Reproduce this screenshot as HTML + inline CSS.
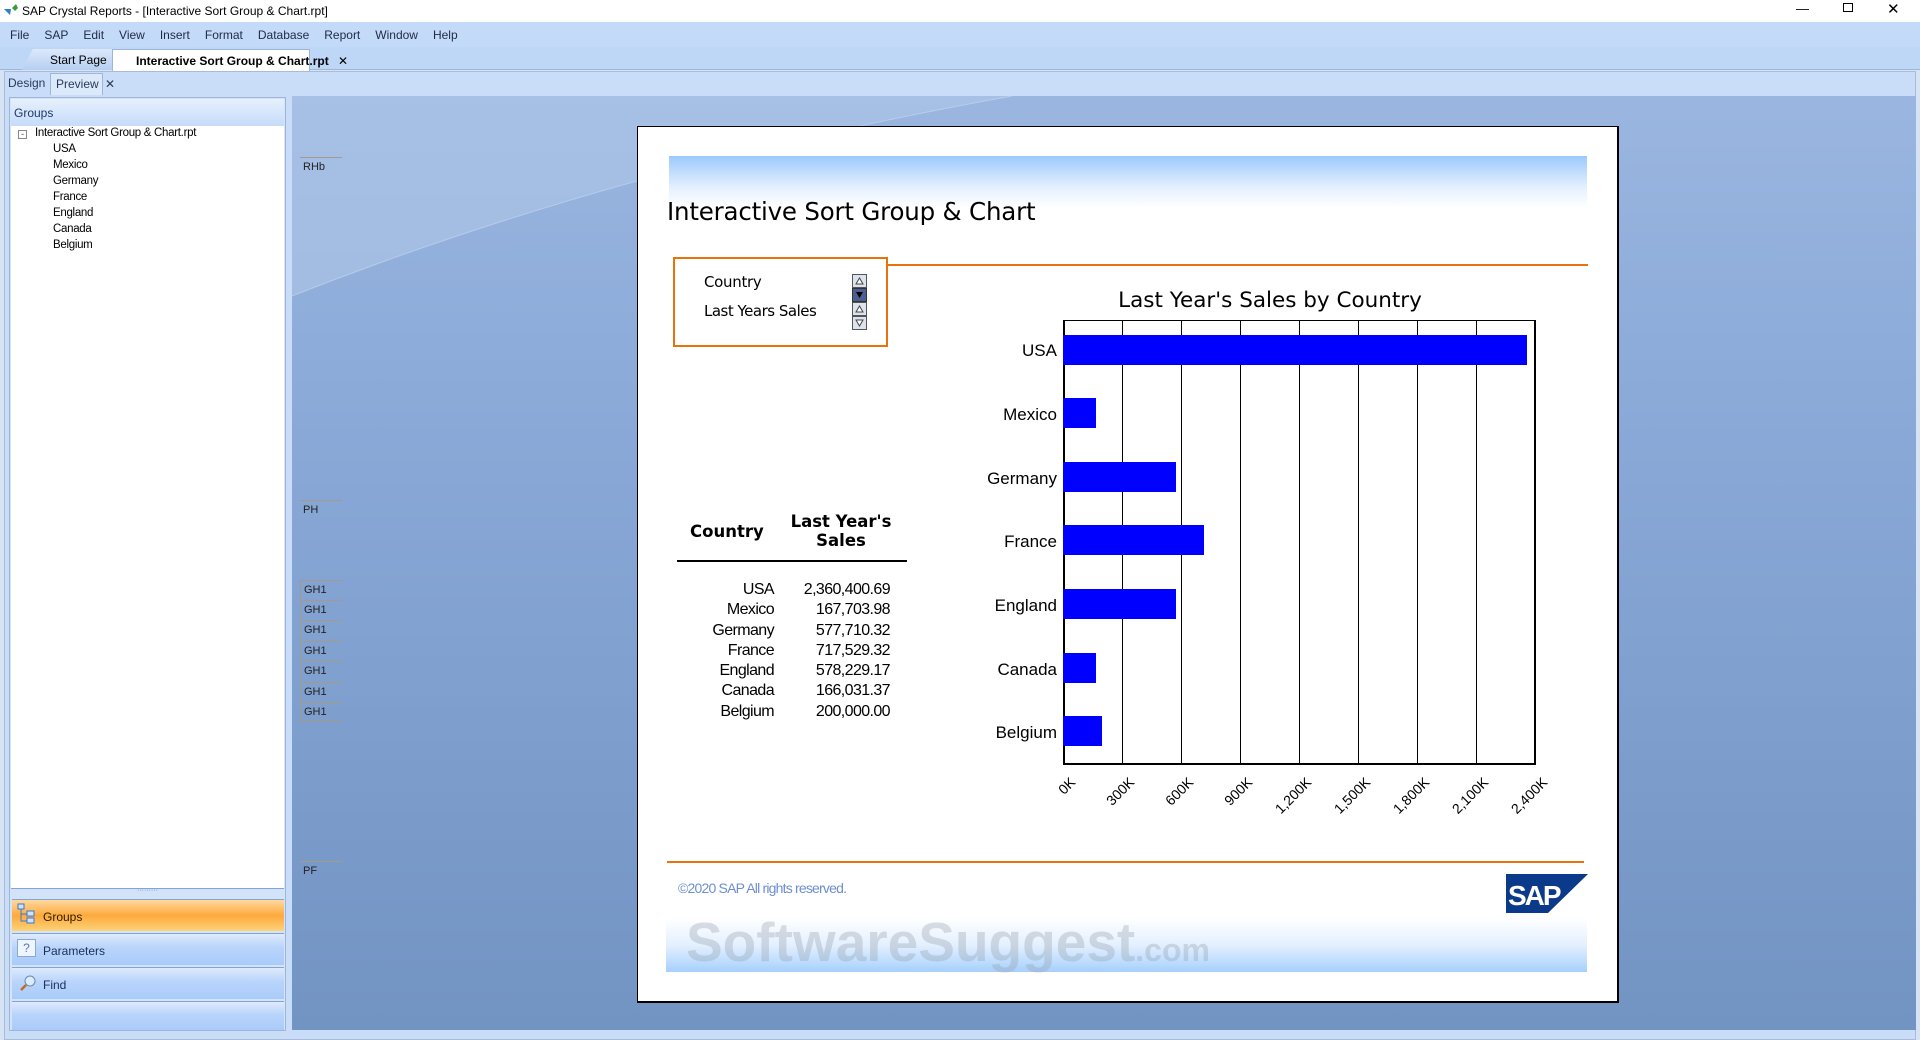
<!DOCTYPE html>
<html><head><meta charset="utf-8">
<style>
*{margin:0;padding:0;box-sizing:border-box}
body{width:1920px;height:1040px;overflow:hidden;position:relative;background:#d5e3f5;font-family:"Liberation Sans",sans-serif;color:#000}
.a{position:absolute;white-space:nowrap}
.menu span{margin-right:15px}
.tree div{position:absolute;font-size:11.5px;letter-spacing:-0.3px}
.gl{position:absolute;left:300px;width:42px;border-top:1px solid #a39a8a;font-size:11px;color:#222;padding:3px 0 0 3px;height:20px}
.gh{border-left:1px solid #a39a8a}
.cl{position:absolute;font-size:17px;text-align:right;width:120px}
.grid{position:absolute;top:320px;width:1px;height:444px;background:#000}
.bar{position:absolute;left:1063px;height:30px;background:#0000ff}
.ax{position:absolute;font-size:14px;transform-origin:right top;transform:rotate(-45deg);text-align:right;width:80px}
.btn{position:absolute;left:12px;width:272px;height:32px;border-top:1px solid #7ea4d8;font-size:12px;color:#1a2f5a;padding:10px 0 0 31px;background:linear-gradient(#dfeafc,#b8d4fb 45%,#aacbfa)}
</style></head><body>
<div class="a" style="left:0;top:0;width:1920px;height:22px;background:#fff"></div>
<svg class="a" style="left:3px;top:3px" width="16" height="14"><path d="M1 6 L7 12 L8 6 Z" fill="#2c7fc9"/><path d="M9 5 L13 1 L15 5 L12 8Z" fill="#3a9a3a"/></svg>
<div class="a" style="left:22px;top:4px;font-size:12px">SAP Crystal Reports - [Interactive Sort Group &amp; Chart.rpt]</div>
<div class="a" style="left:1796px;top:1px;font-size:13px">&#8212;</div>
<div class="a" style="left:1843px;top:3px;width:10px;height:9px;border:1px solid #000"></div>
<div class="a" style="left:1887px;top:0;font-size:15px">&#10005;</div>
<div class="a menu" style="left:0;top:22px;width:1920px;height:25px;background:#c3daf9;font-size:12px;padding:6px 0 0 10px;color:#1e2b45"><span>File</span><span>SAP</span><span>Edit</span><span>View</span><span>Insert</span><span>Format</span><span>Database</span><span>Report</span><span>Window</span><span>Help</span></div>
<div class="a" style="left:0;top:47px;width:1920px;height:23px;background:#bfd7f6;border-bottom:1px solid #9cb5d8"></div>
<div class="a" style="left:22px;top:49px;width:90px;height:21px;background:linear-gradient(#dce9fa,#b6cff2);clip-path:polygon(12% 0,100% 0,100% 100%,0 100%);font-size:12px;padding:4px 0 0 28px">Start Page</div>
<div class="a" style="left:112px;top:49px;width:198px;height:22px;background:#fff;border:1px solid #9cb5d8;border-bottom:none;font-size:12px;font-weight:bold;padding:4px 0 0 23px">Interactive Sort Group &amp; Chart.rpt <span style="font-weight:normal;margin-left:6px">&#10005;</span></div>
<div class="a" style="left:4px;top:71px;width:1912px;height:969px;background:#c9ddf8;border:1px solid #aabbd5"></div>
<div class="a" style="left:8px;top:76px;font-size:12px;color:#2a3a5a">Design</div>
<div class="a" style="left:50px;top:73px;width:53px;height:22px;background:#dce9fa;border:1px solid #9cb5d8;border-bottom:none;font-size:12px;padding:3px 0 0 5px;color:#2a3a5a">Preview <span style="margin-left:3px">&#10005;</span></div>
<div class="a" style="left:9px;top:97px;width:277px;height:934px;background:#d5e3f6;border:1px solid #9cb5d8"></div>
<div class="a" style="left:11px;top:99px;width:273px;height:27px;background:linear-gradient(#e6f0fd,#c6dcfa);font-size:12px;padding:7px 0 0 3px;color:#1e3a6a">Groups</div>
<div class="a" style="left:11px;top:126px;width:273px;height:762px;background:#fff"></div>
<div class="a tree" style="left:0;top:0">
<div style="left:18px;top:130px;width:9px;height:9px;border:1px solid #888;font-size:9px;line-height:6px;text-align:center;color:#444">-</div>
<div style="left:35px;top:127px">Interactive Sort Group &amp; Chart.rpt</div>
<div style="left:53px;top:143px">USA</div>
<div style="left:53px;top:159px">Mexico</div>
<div style="left:53px;top:175px">Germany</div>
<div style="left:53px;top:191px">France</div>
<div style="left:53px;top:207px">England</div>
<div style="left:53px;top:223px">Canada</div>
<div style="left:53px;top:239px">Belgium</div>
</div>
<div class="a" style="left:11px;top:888px;width:273px;height:10px;background:#d2e2f7;border-top:1px solid #7ea4d8;font-size:7px;text-align:center;color:#5a7ab0;line-height:4px">&middot;&middot;&middot;&middot;&middot;&middot;&middot;&middot;&middot;</div>
<div class="btn" style="top:899px;background:linear-gradient(#ffd8a0,#fdaa3c 50%,#fdd37a);color:#2a1a00">Groups</div>
<svg class="a" style="left:17px;top:903px" width="20" height="22"><rect x="1" y="1" width="6" height="5" fill="#cfe3ff" stroke="#3a78d0"/><rect x="10" y="8" width="7" height="5" fill="#cfe3ff" stroke="#3a78d0"/><rect x="10" y="15" width="7" height="5" fill="#cfe3ff" stroke="#3a78d0"/><path d="M4 6V18H10M4 11H10" stroke="#3a78d0" fill="none"/></svg>
<div class="btn" style="top:933px">Parameters</div>
<div class="a" style="left:17px;top:939px;width:19px;height:18px;border:1px solid #8aa8d0;background:#eef5ff;font-size:12px;color:#5a7ab0;text-align:center;line-height:16px">?</div>
<div class="btn" style="top:967px">Find</div>
<svg class="a" style="left:19px;top:975px" width="18" height="16"><circle cx="11" cy="6" r="5" fill="#dcebfa" stroke="#6a8ab8"/><path d="M7 10L2 15" stroke="#c06a20" stroke-width="2.5"/></svg>
<div class="btn" style="top:1001px;height:29px"></div>
<div class="a" style="left:292px;top:96px;width:1624px;height:934px;background:linear-gradient(180deg,#9ab6e0 0%,#88a7d6 40%,#7294c3 100%);overflow:hidden">
<svg width="1624" height="934" style="position:absolute;left:0;top:0"><path d="M0 0H720Q330 70 0 200Z" fill="#b3c9ea" opacity="0.5"/><path d="M720 0Q330 70 0 200" fill="none" stroke="#c8d9f2" stroke-width="1" opacity="0.6"/></svg>
</div>
<div class="gl" style="top:157px">RHb</div>
<div class="gl" style="top:500px">PH</div>
<div class="gl gh" style="top:580px">GH1</div>
<div class="gl gh" style="top:600px">GH1</div>
<div class="gl gh" style="top:620px">GH1</div>
<div class="gl gh" style="top:641px">GH1</div>
<div class="gl gh" style="top:661px">GH1</div>
<div class="gl gh" style="top:682px">GH1</div>
<div class="gl gh" style="top:702px;border-bottom:1px solid #a39a8a">GH1</div>
<div class="gl" style="top:861px">PF</div>
<div class="a" style="left:637px;top:126px;width:982px;height:877px;background:#fff;border:1px solid #000;border-right:2px solid #000;border-bottom:2px solid #000"></div>
<div class="a" style="left:669px;top:156px;width:918px;height:52px;background:linear-gradient(#9cc9fb,#e4f0fe 60%,#fff)"></div>
<div class="a" style="left:667px;top:197px;font-size:24.5px;font-family:'DejaVu Sans',sans-serif;letter-spacing:-0.2px">Interactive Sort Group &amp; Chart</div>
<div class="a" style="left:673px;top:257px;width:215px;height:90px;border:2px solid #e8720c"></div>
<div class="a" style="left:887px;top:264px;width:701px;height:2px;background:#e8720c"></div>
<div class="a" style="left:704px;top:273px;font-size:15px;font-family:'DejaVu Sans',sans-serif;letter-spacing:-0.3px">Country</div>
<div class="a" style="left:704px;top:302px;font-size:15px;font-family:'DejaVu Sans',sans-serif;letter-spacing:-0.5px">Last Years Sales</div>
<svg class="a" style="left:852px;top:274px" width="16" height="58">
<rect x="0.5" y="0.5" width="14" height="13" fill="#dde3ee" stroke="#555"/><path d="M4 10L7.5 4L11 10Z" fill="#fff" stroke="#444"/>
<rect x="0.5" y="14.5" width="14" height="13" fill="#4a5f94" stroke="#333"/><path d="M4 18L7.5 24L11 18Z" fill="#000"/>
<rect x="0.5" y="28.5" width="14" height="13" fill="#dde3ee" stroke="#555"/><path d="M4 38L7.5 32L11 38Z" fill="#fff" stroke="#444"/>
<rect x="0.5" y="42.5" width="14" height="13" fill="#dde3ee" stroke="#555"/><path d="M4 46L7.5 52L11 46Z" fill="#fff" stroke="#444"/>
</svg>
<div class="a" style="left:690px;top:522px;font-size:16.5px;font-weight:bold;font-family:'DejaVu Sans',sans-serif">Country</div>
<div class="a" style="left:781px;top:512px;width:120px;text-align:center;font-size:16.5px;font-weight:bold;line-height:19px;font-family:'DejaVu Sans',sans-serif">Last Year's<br>Sales</div>
<div class="a" style="left:677px;top:560px;width:230px;height:2px;background:#000"></div>
<div class="a" style="left:654px;top:580px;width:120px;text-align:right;line-height:20.3px;font-size:16px;letter-spacing:-0.6px">USA<br>Mexico<br>Germany<br>France<br>England<br>Canada<br>Belgium</div>
<div class="a" style="left:770px;top:580px;width:120px;text-align:right;line-height:20.3px;font-size:16px;letter-spacing:-0.6px">2,360,400.69<br>167,703.98<br>577,710.32<br>717,529.32<br>578,229.17<br>166,031.37<br>200,000.00</div>
<div class="a" style="left:1070px;top:288px;width:400px;text-align:center;font-size:21.5px;font-family:'DejaVu Sans',sans-serif">Last Year's Sales by Country</div>
<div class="a" style="left:1063px;top:320px;width:473px;height:445px;border:2px solid #000;border-top:1px solid #000"></div>
<div class="grid" style="left:1122px"></div><div class="grid" style="left:1181px"></div><div class="grid" style="left:1240px"></div><div class="grid" style="left:1299px"></div><div class="grid" style="left:1358px"></div><div class="grid" style="left:1417px"></div><div class="grid" style="left:1476px"></div>
<div class="bar" style="top:335px;width:464px"></div>
<div class="bar" style="top:398px;width:33px"></div>
<div class="bar" style="top:462px;width:113px"></div>
<div class="bar" style="top:525px;width:141px"></div>
<div class="bar" style="top:589px;width:113px"></div>
<div class="bar" style="top:653px;width:33px"></div>
<div class="bar" style="top:716px;width:39px"></div>
<div class="cl" style="left:937px;top:341px">USA</div>
<div class="cl" style="left:937px;top:405px">Mexico</div>
<div class="cl" style="left:937px;top:469px">Germany</div>
<div class="cl" style="left:937px;top:532px">France</div>
<div class="cl" style="left:937px;top:596px">England</div>
<div class="cl" style="left:937px;top:660px">Canada</div>
<div class="cl" style="left:937px;top:723px">Belgium</div>
<div class="ax" style="left:987px;top:774px">0K</div>
<div class="ax" style="left:1046px;top:774px">300K</div>
<div class="ax" style="left:1105px;top:774px">600K</div>
<div class="ax" style="left:1164px;top:774px">900K</div>
<div class="ax" style="left:1223px;top:774px">1,200K</div>
<div class="ax" style="left:1282px;top:774px">1,500K</div>
<div class="ax" style="left:1341px;top:774px">1,800K</div>
<div class="ax" style="left:1400px;top:774px">2,100K</div>
<div class="ax" style="left:1459px;top:774px">2,400K</div>
<div class="a" style="left:667px;top:861px;width:917px;height:2px;background:#e8720c"></div>
<div class="a" style="left:678px;top:880px;font-size:14px;color:#6d8fd0;letter-spacing:-0.8px">&copy;2020 SAP All rights reserved.</div>
<div class="a" style="left:666px;top:918px;width:921px;height:54px;background:linear-gradient(#fff,#e4f0fe 50%,#a6d0fd)"></div>
<div class="a" style="left:686px;top:910px;font-size:55px;font-weight:bold;color:rgba(150,160,175,0.35);letter-spacing:0px">SoftwareSuggest<span style="font-size:32px">.com</span></div>
<svg class="a" style="left:1506px;top:874px" width="82" height="40"><path d="M0 0H82L42 39H0Z" fill="#0c3a8a"/><text x="2" y="31" font-family="Liberation Sans" font-weight="bold" font-size="28" fill="#fff" letter-spacing="-2">SAP</text></svg>
</body></html>
